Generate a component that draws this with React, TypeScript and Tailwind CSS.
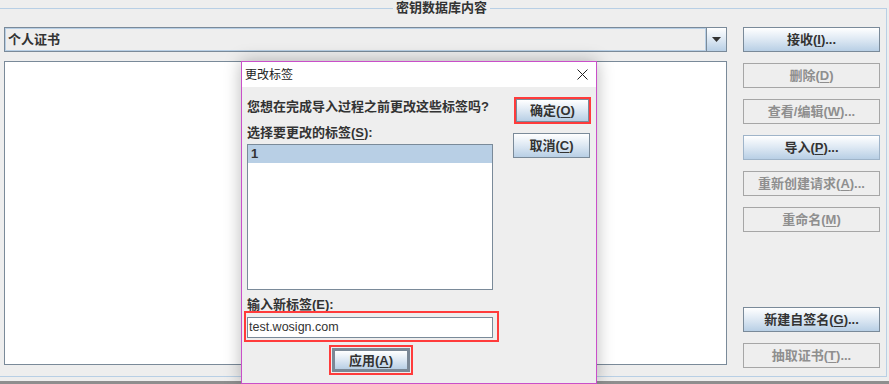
import React from "react";

type BtnProps = {
  pre: string;
  key_: string;
  post?: string;
  disabled?: boolean;
  focused?: boolean;
};

function Btn({ pre, key_, post = ")", disabled, focused }: BtnProps) {
  const base = "h-[25px] flex items-center justify-center text-[13px] font-bold leading-none";
  const look = disabled
    ? "border border-[#a6a6a6] bg-[#eeeeee] text-[#8f8f8f]"
    : focused
    ? "border border-[#9fb4c9] bg-gradient-to-b from-white via-[#dde8f3] to-[#b8cfe5] text-[#333333]"
    : "border border-[#7a8a99] bg-gradient-to-b from-white via-[#dde8f3] to-[#b8cfe5] text-[#333333]";
  return (
    <div className={`${base} ${look}`}>
      {pre}
      <span className="underline underline-offset-2">{key_}</span>
      {post}
    </div>
  );
}

export default function App() {
  return (
    <div className="relative w-[889px] h-[384px] overflow-hidden bg-[#eeeeee] text-[#333333] font-['Liberation_Sans','Noto_Sans_CJK_SC',sans-serif]">
      {/* titled border: 密钥数据库内容 */}
      <div className="relative mt-[8px] h-[369px] w-[887px] border-t border-r border-b border-[#b8cfe5] pt-[18px] pl-[4px] pr-[6px] pb-[8px] flex gap-[16px]">
        <span className="absolute -top-[9px] left-[393px] bg-[#eeeeee] px-[3px] text-[13px] font-bold leading-[16px]">
          密钥数据库内容
        </span>

        {/* left: combo + list */}
        <div className="w-[723px] flex flex-col">
          <div className="h-[25px] flex border border-[#7a8a99] bg-[#eeeeee]">
            <div className="flex-1 flex items-center border border-[#b8cfe5] pl-[2px] text-[13px] font-bold">
              个人证书
            </div>
            <div className="w-[20px] flex items-center justify-center border-l border-[#7a8a99] bg-gradient-to-b from-white via-[#dde8f3] to-[#b8cfe5]">
              <svg width="9" height="5" viewBox="0 0 9 5">
                <path d="M0 0 H9 L4.5 5 Z" fill="#333333" />
              </svg>
            </div>
          </div>
          <div className="mt-[9px] h-[304px] bg-white border border-[#7a8a99]" />
        </div>

        {/* right: buttons */}
        <div className="w-[137px] flex flex-col justify-between">
          <div className="flex flex-col gap-[11px]">
            <Btn pre="接收(" key_="I" post=")..." />
            <Btn pre="删除(" key_="D" disabled />
            <Btn pre="查看/编辑(" key_="W" post=")..." disabled />
            <Btn pre="导入(" key_="P" post=")..." focused />
            <Btn pre="重新创建请求(" key_="A" post=")..." disabled />
            <Btn pre="重命名(" key_="M" disabled />
          </div>
          <div className="flex flex-col gap-[11px]">
            <Btn pre="新建自签名(" key_="G" post=")..." />
            <Btn pre="抽取证书(" key_="T" post=")..." disabled />
          </div>
        </div>
      </div>
      <div className="mt-[4px] h-[3px] bg-[#8e8e8e]" />

      {/* dialog: 更改标签 */}
      <div className="absolute left-[241px] top-[61px] w-[356px] h-[323px] border border-[#c94fc9] bg-[#eeeeee] shadow-[0_0_16px_rgba(0,0,0,0.28)]">
        <div className="h-[25px] bg-white flex items-center justify-between pl-[3px] pr-[8px]">
          <span className="text-[12px] leading-none text-[#222222]">更改标签</span>
          <svg width="11" height="11" viewBox="0 0 11 11">
            <path d="M0.5 0.5 L10.5 10.5 M10.5 0.5 L0.5 10.5" stroke="#222222" strokeWidth="1" />
          </svg>
        </div>

        <div className="flex pl-[2px]">
          <div className="w-[255px] flex flex-col text-[13px] font-bold">
            <p className="ml-[3px] mt-[12px] leading-[16px]">您想在完成导入过程之前更改这些标签吗?</p>
            <p className="ml-[3px] mt-[10px] leading-[16px]">
              选择要更改的标签(<span className="underline underline-offset-2">S</span>):
            </p>
            <div className="ml-[3px] mt-[3px] w-[246px] h-[146px] border border-[#7a8a99] bg-white">
              <div className="h-[18px] bg-[#b8cfe5] pl-[3px] leading-[18px]">1</div>
            </div>
            <p className="ml-[3px] mt-[9px] leading-[12px]">
              输入新标签(<span className="underline underline-offset-2">E</span>):
            </p>
            <div className="h-[31px] border-2 border-[#ff3b3b] pt-[4px] pl-[1px] pr-[4px]">
              <div className="h-[21px] border border-[#7a8a99] bg-white flex items-center pl-[1px] text-[12.5px] font-normal text-[#333333]">
                test.wosign.com
              </div>
            </div>
            <div className="mt-[3px] ml-[85px] w-[84px] h-[30px] border-2 border-[#ff3b3b] p-[1px]">
              <div className="h-full flex items-center justify-center border-[3px] border-[#7b8896] bg-gradient-to-b from-white via-[#dde8f3] to-[#b8cfe5] leading-none">
                应用(<span className="underline underline-offset-2">A</span>)
              </div>
            </div>
          </div>

          <div className="ml-[15px] mt-[10px] w-[78px] flex flex-col text-[13px] font-bold">
            <div className="w-[77px] h-[27px] border-2 border-[#ff3b3b]">
              <div className="h-full flex items-center justify-center border border-[#7a8a99] bg-gradient-to-b from-white via-[#dde8f3] to-[#b8cfe5] leading-none">
                确定(<span className="underline underline-offset-2">O</span>)
              </div>
            </div>
            <div className="mt-[9px] -ml-[1px] w-[77px] h-[25px] flex items-center justify-center border border-[#7a8a99] bg-gradient-to-b from-white via-[#dde8f3] to-[#b8cfe5] leading-none">
              取消(<span className="underline underline-offset-2">C</span>)
            </div>
          </div>
        </div>
      </div>
    </div>
  );
}
